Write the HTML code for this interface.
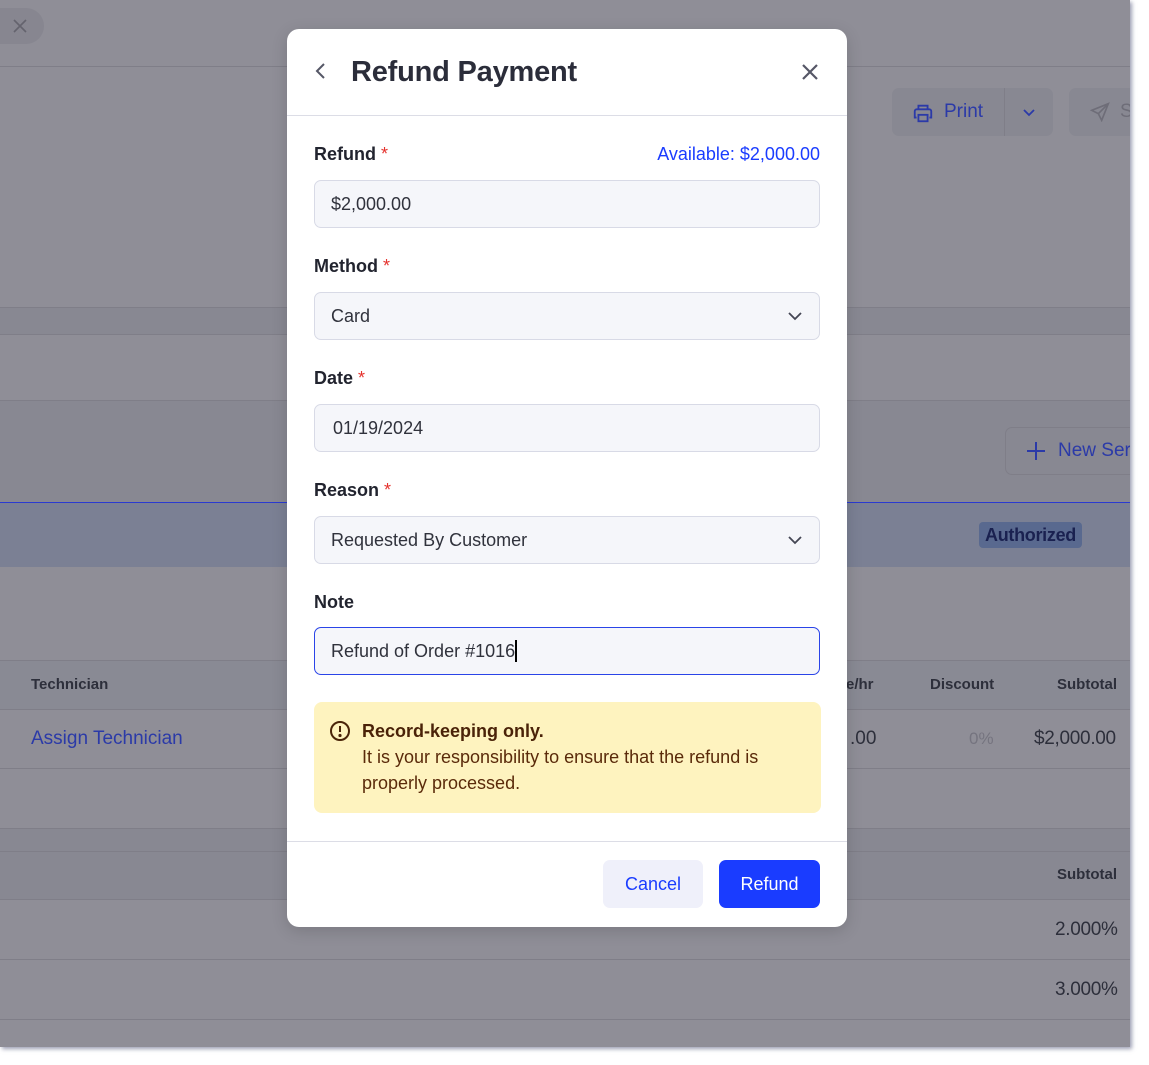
<!DOCTYPE html>
<html><head><meta charset="utf-8"><style>
*{box-sizing:border-box;margin:0;padding:0}
body{width:1149px;height:1065px;background:#fff;font-family:"Liberation Sans",sans-serif;position:relative;overflow:hidden}
.a{position:absolute}
.win{left:0;top:0;width:1130px;height:1047px;background:#8f8e97;box-shadow:2px 2px 4px rgba(90,95,130,.6);overflow:hidden}
.hl{left:0;width:1130px;height:1px;background:#7f7e88}
.t{white-space:nowrap}
.modal{left:287px;top:29px;width:560px;height:898px;background:#fff;border-radius:12px;box-shadow:0 4px 16px rgba(0,0,0,.15)}
.lbl{font-size:18px;font-weight:bold;color:#22242f;line-height:24px}
.lbl b{color:#e5322d;font-weight:normal}
.inp{left:27px;width:506px;height:48px;background:#f5f6fa;border:1px solid #d8dae6;border-radius:7px;font-size:18px;color:#30323c;line-height:46px;padding-left:16px}
</style></head><body>
<div class="a win">
 <div class="a" style="left:-20px;top:8px;width:64px;height:36px;border-radius:18px;background:#878690"></div>
 <svg class="a" style="left:12px;top:18px" width="16" height="16" viewBox="0 0 16 16"><path d="M2 2L14 14M14 2L2 14" stroke="#64636e" stroke-width="1.6"/></svg>
 <div class="a hl" style="top:66px"></div>
 <div class="a" style="left:892px;top:88px;width:161px;height:48px;border-radius:7px;background:#888892"></div>
 <div class="a" style="left:1004px;top:88px;width:1px;height:48px;background:#7f7e88"></div>
 <svg class="a" style="left:912px;top:102px" width="22" height="22" viewBox="0 0 24 24" fill="none" stroke="#2b3aa8" stroke-width="2"><path d="M7 8V4h10v4M5 17H3v-7a2 2 0 012-2h14a2 2 0 012 2v7h-2"/><rect x="7" y="14" width="10" height="7"/></svg>
 <div class="a t" style="left:944px;top:101px;font-size:19px;color:#2b3aa8">Print</div>
 <svg class="a" style="left:1021px;top:106px" width="16" height="14" viewBox="0 0 16 14"><path d="M3 4l5 5 5-5" stroke="#2b3aa8" stroke-width="1.8" fill="none"/></svg>
 <div class="a" style="left:1069px;top:88px;width:100px;height:48px;border-radius:7px;background:#888892"></div>
 <svg class="a" style="left:1090px;top:102px" width="20" height="20" viewBox="0 0 24 24" fill="none" stroke="#6e6d78" stroke-width="2"><path d="M22 2L2 10l8 4 4 8z M22 2L10 14"/></svg>
 <div class="a t" style="left:1120px;top:101px;font-size:19px;color:#6e6d78">S</div>
 <div class="a" style="left:0;top:307px;width:1130px;height:28px;background:#888892;border-top:1px solid #7f7e88;border-bottom:1px solid #7f7e88"></div>
 <div class="a" style="left:0;top:400px;width:1130px;height:102px;background:#888892;border-top:1px solid #7f7e88"></div>
 <div class="a" style="left:1005px;top:427px;width:140px;height:48px;border:1px solid #7f7e88;border-radius:7px"></div>
 <svg class="a" style="left:1026px;top:441px" width="20" height="20" viewBox="0 0 20 20"><path d="M10 1v18M1 10h18" stroke="#2b3aa8" stroke-width="2"/></svg>
 <div class="a t" style="left:1058px;top:440px;font-size:19px;color:#2b3aa8">New Serv</div>
 <div class="a" style="left:0;top:502px;width:1130px;height:65px;background:#7b8094;border-top:1px solid #2a3ad0"></div>
 <div class="a t" style="left:979px;top:522px;height:26px;padding:0 6px;border-radius:4px;background:#59698f;font-size:18px;font-weight:bold;color:#1a2150;line-height:26px;letter-spacing:-0.3px">Authorized</div>
 <div class="a" style="left:0;top:660px;width:1130px;height:50px;background:#898a94;border-top:1px solid #7f7e88;border-bottom:1px solid #7f7e88"></div>
 <div class="a t" style="left:31px;top:676px;font-size:15px;font-weight:bold;color:#2d2f3b">Technician</div>
 <div class="a t" style="left:846px;top:676px;font-size:15px;font-weight:bold;color:#2d2f3b">e/hr</div>
 <div class="a t" style="left:930px;top:676px;font-size:15px;font-weight:bold;color:#2d2f3b">Discount</div>
 <div class="a t" style="left:1057px;top:676px;font-size:15px;font-weight:bold;color:#2d2f3b">Subtotal</div>
 <div class="a t" style="left:31px;top:728px;font-size:19px;color:#2b3aa8">Assign Technician</div>
 <div class="a t" style="left:850px;top:728px;font-size:19px;color:#2d2f3b">.00</div>
 <div class="a t" style="left:969px;top:729px;font-size:17px;color:#75747f">0%</div>
 <div class="a t" style="left:1034px;top:728px;font-size:19px;color:#2d2f3b;letter-spacing:-0.3px">$2,000.00</div>
 <div class="a hl" style="top:768px"></div>
 <div class="a" style="left:0;top:828px;width:1130px;height:72px;background:#888892;border-top:1px solid #7f7e88;border-bottom:1px solid #7f7e88"></div>
 <div class="a hl" style="top:851px"></div>
 <div class="a t" style="left:1057px;top:866px;font-size:15px;font-weight:bold;color:#2d2f3b">Subtotal</div>
 <div class="a t" style="left:1055px;top:919px;font-size:19px;color:#2d2f3b;letter-spacing:-0.3px">2.000%</div>
 <div class="a hl" style="top:959px"></div>
 <div class="a t" style="left:1055px;top:979px;font-size:19px;color:#2d2f3b;letter-spacing:-0.3px">3.000%</div>
 <div class="a hl" style="top:1019px"></div>
</div>

<div class="a modal">
 <svg class="a" style="left:27px;top:32px" width="14" height="20" viewBox="0 0 14 20"><path d="M10 3L3 10l7 7" stroke="#555766" stroke-width="2" fill="none"/></svg>
 <div class="a t" style="left:64px;top:23px;font-size:29px;font-weight:bold;color:#2b2d3a;line-height:40px;letter-spacing:-0.2px">Refund Payment</div>
 <svg class="a" style="left:514px;top:34px" width="18" height="18" viewBox="0 0 18 18"><path d="M2 2L16 16M16 2L2 16" stroke="#555766" stroke-width="2.2"/></svg>
 <div class="a" style="left:0;top:86px;width:560px;height:1px;background:#dcdde6"></div>

 <div class="a lbl t" style="left:27px;top:113px">Refund <b>*</b></div>
 <div class="a t" style="right:27px;top:113px;font-size:18px;color:#1a3cff;line-height:24px">Available: $2,000.00</div>
 <div class="a inp" style="top:151px">$2,000.00</div>

 <div class="a lbl t" style="left:27px;top:225px">Method <b>*</b></div>
 <div class="a inp" style="top:263px">Card</div>
 <svg class="a" style="left:500px;top:281px" width="16" height="12" viewBox="0 0 16 12"><path d="M2 3l6 6 6-6" stroke="#444654" stroke-width="1.8" fill="none"/></svg>

 <div class="a lbl t" style="left:27px;top:337px">Date <b>*</b></div>
 <div class="a inp" style="top:375px;padding-left:18px">01/19/2024</div>

 <div class="a lbl t" style="left:27px;top:449px">Reason <b>*</b></div>
 <div class="a inp" style="top:487px">Requested By Customer</div>
 <svg class="a" style="left:500px;top:505px" width="16" height="12" viewBox="0 0 16 12"><path d="M2 3l6 6 6-6" stroke="#444654" stroke-width="1.8" fill="none"/></svg>

 <div class="a lbl t" style="left:27px;top:561px">Note</div>
 <div class="a inp" style="top:598px;border:1.5px solid #2a44e8">Refund of Order #1016<span style="display:inline-block;width:1.5px;height:22px;background:#000;vertical-align:middle;margin-top:-3px"></span></div>

 <div class="a" style="left:27px;top:673px;width:507px;height:111px;background:#fef3bf;border-radius:8px"></div>
 <svg class="a" style="left:42px;top:691px" width="22" height="22" viewBox="0 0 22 22" fill="none" stroke="#4a2408" stroke-width="2"><circle cx="11" cy="11" r="9"/><path d="M11 6v6"/><circle cx="11" cy="15.5" r=".6" fill="#4a2408"/></svg>
 <div class="a" style="left:75px;top:689px;font-size:18px;color:#5a2a0a;line-height:26px;width:440px">
  <div style="font-weight:bold;color:#4a2208">Record-keeping only.</div>
  It is your responsibility to ensure that the refund is properly processed.
 </div>

 <div class="a" style="left:0;top:812px;width:560px;height:1px;background:#dcdde6"></div>
 <div class="a" style="left:316px;top:831px;width:100px;height:48px;border-radius:7px;background:#eff0fa;color:#1a3cff;font-size:18px;line-height:48px;text-align:center">Cancel</div>
 <div class="a" style="left:432px;top:831px;width:101px;height:48px;border-radius:7px;background:#1a3cff;color:#fff;font-size:18px;line-height:48px;text-align:center">Refund</div>
</div>
</body></html>
